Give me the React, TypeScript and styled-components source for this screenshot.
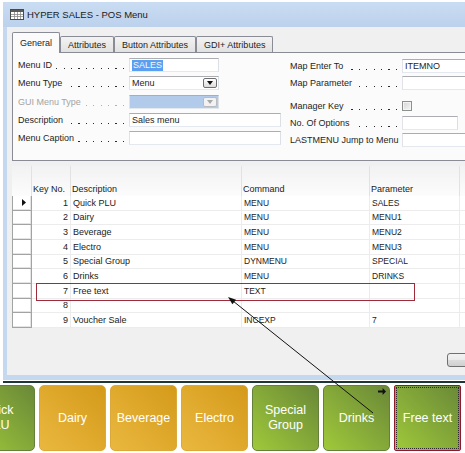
import styled, { createGlobalStyle, css } from 'styled-components';

const GlobalStyle = createGlobalStyle`
  html, body {
    margin: 0;
    padding: 0;
    background: #fff;
  }
  body {
    font-family: "Liberation Sans", Arial, sans-serif;
    color: #1e1e1e;
  }
`;

const Page = styled.div`
  position: relative;
  width: 465px;
  height: 453px;
  overflow: hidden;
  background: #fff;
`;

const Window = styled.div`
  margin: 2px 0 0 3px;
  width: 530px;
  height: 378px;
  display: flex;
  flex-direction: column;
  background: #c4d8f0;
`;

const TitleBar = styled.div`
  height: 25px;
  flex: none;
  display: flex;
  align-items: center;
  gap: 3px;
  padding-left: 7px;
  background: linear-gradient(to bottom, #c9dcf2, #bcd1ec);
  font-size: 9.5px;
  color: #1b1b1b;
`;

const Frame = styled.div`
  flex: 1;
  display: flex;
  padding: 0 0 5px 4px;
`;

const Client = styled.div`
  flex: 1;
  display: flex;
  flex-direction: column;
  padding: 0 5px;
  background: #f0f0f0;
`;

const TabStrip = styled.div`
  margin-top: 5px;
  height: 20px;
  display: flex;
  align-items: flex-end;
`;

const Tab = styled.div<{ $active?: boolean }>`
  position: relative;
  box-sizing: border-box;
  height: ${({ $active }) => ($active ? 21 : 16)}px;
  margin-bottom: ${({ $active }) => ($active ? -1 : 0)}px;
  z-index: ${({ $active }) => ($active ? 1 : 0)};
  padding: 0 7px;
  display: flex;
  align-items: center;
  border: 1px solid #898c95;
  border-bottom: none;
  border-radius: 2px 2px 0 0;
  font-size: 9px;
  background: ${({ $active }) => ($active ? '#fbfbfb' : 'linear-gradient(to bottom, #f3f3f3, #e1e1e1)')};
`;

const Panel = styled.div`
  box-sizing: border-box;
  height: 109px;
  border: 1px solid #898c95;
  background: #fbfbfb;
  padding: 5px 0 0 5px;
  display: flex;
`;

const LeftColumn = styled.div`
  width: 272px;
  display: flex;
  flex-direction: column;
  gap: 4.25px;
`;

const RightColumn = styled.div`
  display: flex;
  flex-direction: column;
  gap: 3px;
  padding-top: 1px;
`;

const FieldRow = styled.div<{ $offset?: number }>`
  height: 14px;
  display: flex;
  align-items: center;
  margin-top: ${({ $offset }) => $offset ?? 0}px;
`;

const Label = styled.div<{ $width: number; $disabled?: boolean }>`
  width: ${({ $width }) => $width}px;
  height: 14px;
  flex: none;
  display: flex;
  align-items: center;
  font-size: 9px;
  white-space: nowrap;
  overflow: hidden;
  color: ${({ $disabled }) => ($disabled ? '#a3a3a3' : '#1e1e1e')};
`;

const Leader = styled.span<{ $disabled?: boolean }>`
  flex: 1;
  align-self: stretch;
  margin: 0 4px 0 4px;
  background-image: repeating-linear-gradient(
    to left,
    transparent 0 1px,
    ${({ $disabled }) => ($disabled ? '#b0b0b0' : '#2a2a2a')} 1px 2.2px,
    transparent 2.2px 7.4px
  );
  background-size: 100% 1.2px;
  background-repeat: no-repeat;
  background-position: left 0 top 10px;
`;

const Input = styled.div<{ $width: number; $disabled?: boolean }>`
  box-sizing: border-box;
  width: ${({ $width }) => $width}px;
  height: 14px;
  flex: none;
  display: flex;
  align-items: center;
  padding-left: 2px;
  border: 1px solid;
  border-color: #abadb3 #dbdfe6 #e3e9ef #e2e3ea;
  background: ${({ $disabled }) => ($disabled ? '#b3cbea' : '#fff')};
  font-size: 9px;
  white-space: nowrap;
  overflow: hidden;
`;

const Selected = styled.span`
  background: #5b9ff0;
  color: #f2f7ff;
  padding: 0 1px;
  line-height: 11px;
`;

const DropButton = styled.span<{ $disabled?: boolean }>`
  box-sizing: border-box;
  margin-left: auto;
  margin-right: 1px;
  width: 14px;
  height: 10px;
  display: flex;
  align-items: center;
  justify-content: center;
  border: 1px solid ${({ $disabled }) => ($disabled ? '#b8bcc2' : '#6f6f6f')};
  border-radius: 2px;
  background: ${({ $disabled }) => ($disabled ? '#f2f2f2' : 'linear-gradient(to bottom, #ffffff, #dcdcdc)')};
`;

const CheckBox = styled.span`
  box-sizing: border-box;
  width: 10px;
  height: 10px;
  border: 1px solid #8e8f8f;
  background: linear-gradient(135deg, #d5d5d5, #f7f7f7);
  box-shadow: inset 0 0 0 1px #f4f4f4;
`;

const GridTable = styled.div`
  margin-top: 5px;
  height: 162px;
  flex: none;
  display: flex;
  flex-direction: column;
  background: #fff;
`;

const columns = css`
  display: grid;
  grid-template-columns: 20px 39px 171px 128px 90px 1fr;
`;

const HeaderRow = styled.div`
  ${columns};
  height: 30px;
  flex: none;
  background: linear-gradient(to bottom, #f2f2f2, #fcfcfc);
`;

const HeaderCell = styled.div`
  border-right: 1px solid #e2e2e2;
  display: flex;
  align-items: flex-end;
  padding: 0 0 2px 1px;
  font-size: 9px;
  color: #222;
  white-space: nowrap;
`;

const DataRow = styled.div`
  ${columns};
  height: 14.67px;
  flex: none;
`;

const RowSelector = styled.div`
  box-sizing: border-box;
  display: flex;
  align-items: center;
  justify-content: flex-end;
  padding-right: 5px;
  border: 1px solid #a3a3a3;
  border-top: none;
  background: #fff;
  box-shadow: inset -1px -1px 0 #e4e4e4;
`;

const Cell = styled.div<{ $align?: 'left' | 'right'; $caps?: boolean }>`
  box-sizing: border-box;
  display: flex;
  align-items: center;
  justify-content: ${({ $align }) => ($align === 'right' ? 'flex-end' : 'flex-start')};
  padding: 0 2px;
  border-right: 1px solid #ececec;
  border-bottom: 1px solid #ececec;
  font-size: ${({ $caps }) => ($caps ? 8.5 : 9)}px;
  color: #222;
  white-space: nowrap;
  overflow: hidden;
`;

const Footer = styled.div`
  flex: 1;
  display: flex;
  align-items: flex-start;
  padding-top: 25px;
`;

const SmallButton = styled.div`
  margin-left: auto;
  margin-right: 9px;
  box-sizing: border-box;
  width: 72px;
  height: 14px;
  border: 1px solid #707070;
  border-radius: 3px;
  background: linear-gradient(to bottom, #f2f2f2, #ebebeb 50%, #dddddd 50%, #cfcfcf);
`;

const Divider = styled.div`
  margin: 1px 0 0 3px;
  height: 2px;
  background: #1d3637;
`;

const ButtonStrip = styled.div`
  margin: 2px 0 0 -32px;
  display: flex;
  gap: 4px;
`;

const PosButton = styled.div<{ $tone: 'orange' | 'green'; $focused?: boolean; $nudge?: number }>`
  position: relative;
  box-sizing: border-box;
  flex: 0 0 67px;
  height: 66px;
  display: flex;
  align-items: center;
  justify-content: center;
  padding-right: ${({ $nudge }) => $nudge ?? 0}px;
  text-align: center;
  line-height: 15px;
  font-size: 12.5px;
  color: #fff;
  border-radius: 5px;
  border: 1px solid ${({ $tone }) => ($tone === 'orange' ? '#dba83a' : '#65803a')};
  background: ${({ $tone }) =>
    $tone === 'orange'
      ? 'linear-gradient(to top right, #eab83f, #d49a1a)'
      : 'linear-gradient(to top right, #a0c93a, #6a8838)'};
  ${({ $focused }) =>
    $focused &&
    css`
      border-color: #8b1a2a;
      border-radius: 2px;
      outline: 1px dotted #2b2b2b;
      outline-offset: -3px;
    `}
`;

const CornerArrow = styled.svg`
  position: absolute;
  top: 2px;
  right: 3px;
`;

const Overlay = styled.svg`
  position: absolute;
  left: 0;
  top: 0;
  pointer-events: none;
`;

const Highlight = styled.div`
  position: absolute;
  left: 36px;
  top: 283px;
  width: 379px;
  height: 18px;
  box-sizing: border-box;
  border: 1px solid #9e2a3a;
  pointer-events: none;
`;

type Line = { key: string; description: string; command: string; parameter: string };

const lines: Line[] = [
  { key: '1', description: 'Quick PLU', command: 'MENU', parameter: 'SALES' },
  { key: '2', description: 'Dairy', command: 'MENU', parameter: 'MENU1' },
  { key: '3', description: 'Beverage', command: 'MENU', parameter: 'MENU2' },
  { key: '4', description: 'Electro', command: 'MENU', parameter: 'MENU3' },
  { key: '5', description: 'Special Group', command: 'DYNMENU', parameter: 'SPECIAL' },
  { key: '6', description: 'Drinks', command: 'MENU', parameter: 'DRINKS' },
  { key: '7', description: 'Free text', command: 'TEXT', parameter: '' },
  { key: '8', description: '', command: '', parameter: '' },
  { key: '9', description: 'Voucher Sale', command: 'INCEXP', parameter: '7' },
];

type PosKey = { label: string[]; tone: 'orange' | 'green'; focused?: boolean; next?: boolean; nudge?: number };

const posKeys: PosKey[] = [
  { label: ['Quick', 'PLU'], tone: 'green', nudge: 8 },
  { label: ['Dairy'], tone: 'orange' },
  { label: ['Beverage'], tone: 'orange' },
  { label: ['Electro'], tone: 'orange' },
  { label: ['Special', 'Group'], tone: 'green' },
  { label: ['Drinks'], tone: 'green', next: true },
  { label: ['Free text'], tone: 'green', focused: true },
];

const FormIcon = () => (
  <svg width="14" height="11" viewBox="0 0 14 11">
    <rect x="0.5" y="0.5" width="13" height="10" fill="#fff" stroke="#4a4a4a" />
    <rect x="1" y="1" width="12" height="2" fill="#5a5a5a" />
    <path d="M1 5.5h12M1 7.5h12M4.5 3v7M7.5 3v7M10.5 3v7" stroke="#8a8a8a" strokeWidth="0.8" />
  </svg>
);

const DownTriangle = ({ color }: { color: string }) => (
  <svg width="6" height="4" viewBox="0 0 6 4">
    <path d="M0 0h6L3 4z" fill={color} />
  </svg>
);

const Dotted = ({ text, width, disabled }: { text: string; width: number; disabled?: boolean }) => (
  <Label $width={width} $disabled={disabled}>
    <span>{text}</span>
    <Leader $disabled={disabled} />
  </Label>
);

const App = () => (
  <Page>
    <GlobalStyle />
    <Window>
      <TitleBar>
        <FormIcon />
        <span>HYPER SALES - POS Menu</span>
      </TitleBar>
      <Frame>
        <Client>
          <TabStrip>
            <Tab $active>General</Tab>
            <Tab>Attributes</Tab>
            <Tab>Button Attributes</Tab>
            <Tab>GDI+ Attributes</Tab>
          </TabStrip>
          <Panel>
            <LeftColumn>
              <FieldRow>
                <Dotted text="Menu ID" width={111} />
                <Input $width={90}>
                  <Selected>SALES</Selected>
                </Input>
              </FieldRow>
              <FieldRow>
                <Dotted text="Menu Type" width={111} />
                <Input $width={90}>
                  Menu
                  <DropButton>
                    <DownTriangle color="#111" />
                  </DropButton>
                </Input>
              </FieldRow>
              <FieldRow>
                <Dotted text="GUI Menu Type" width={111} disabled />
                <Input $width={90} $disabled>
                  <DropButton $disabled>
                    <DownTriangle color="#a8a8a8" />
                  </DropButton>
                </Input>
              </FieldRow>
              <FieldRow>
                <Dotted text="Description" width={111} />
                <Input $width={152}>Sales menu</Input>
              </FieldRow>
              <FieldRow>
                <Dotted text="Menu Caption" width={111} />
                <Input $width={152} />
              </FieldRow>
            </LeftColumn>
            <RightColumn>
              <FieldRow>
                <Dotted text="Map Enter To" width={112} />
                <Input $width={90}>ITEMNO</Input>
              </FieldRow>
              <FieldRow>
                <Dotted text="Map Parameter" width={112} />
                <Input $width={90} />
              </FieldRow>
              <FieldRow $offset={6}>
                <Dotted text="Manager Key" width={112} />
                <CheckBox />
              </FieldRow>
              <FieldRow>
                <Dotted text="No. Of Options" width={112} />
                <Input $width={56} />
              </FieldRow>
              <FieldRow>
                <Label $width={112}>LASTMENU Jump to Menu</Label>
                <Input $width={90} />
              </FieldRow>
            </RightColumn>
          </Panel>
          <GridTable>
            <HeaderRow>
              <HeaderCell />
              <HeaderCell>Key No.</HeaderCell>
              <HeaderCell>Description</HeaderCell>
              <HeaderCell>Command</HeaderCell>
              <HeaderCell>Parameter</HeaderCell>
              <HeaderCell />
            </HeaderRow>
            {lines.map((line, i) => (
              <DataRow key={line.key}>
                <RowSelector>
                  {i === 0 && (
                    <svg width="4" height="7" viewBox="0 0 4 7">
                      <path d="M0 0l4 3.5L0 7z" fill="#111" />
                    </svg>
                  )}
                </RowSelector>
                <Cell $align="right">{line.key}</Cell>
                <Cell>{line.description}</Cell>
                <Cell $caps>{line.command}</Cell>
                <Cell $caps>{line.parameter}</Cell>
                <Cell />
              </DataRow>
            ))}
          </GridTable>
          <Footer>
            <SmallButton />
          </Footer>
        </Client>
      </Frame>
    </Window>
    <Divider />
    <ButtonStrip>
      {posKeys.map((k) => (
        <PosButton key={k.label.join(' ')} $tone={k.tone} $focused={k.focused} $nudge={k.nudge}>
          <span>
            {k.label.map((part, i) => (
              <span key={part}>
                {i > 0 && <br />}
                {part}
              </span>
            ))}
          </span>
          {k.next && (
            <CornerArrow width="8" height="7" viewBox="0 0 8 7">
              <path d="M0 2.6h4.6V0L8 3.5 4.6 7V4.4H0z" fill="#111" />
            </CornerArrow>
          )}
        </PosButton>
      ))}
    </ButtonStrip>
    <Highlight />
    <Overlay width="465" height="453" viewBox="0 0 465 453">
      <line x1="373" y1="413" x2="233" y2="301" stroke="#111" strokeWidth="1" />
      <path d="M228 297L236.1 299.7L232.4 304.3Z" fill="#111" />
    </Overlay>
  </Page>
);

export default App;
